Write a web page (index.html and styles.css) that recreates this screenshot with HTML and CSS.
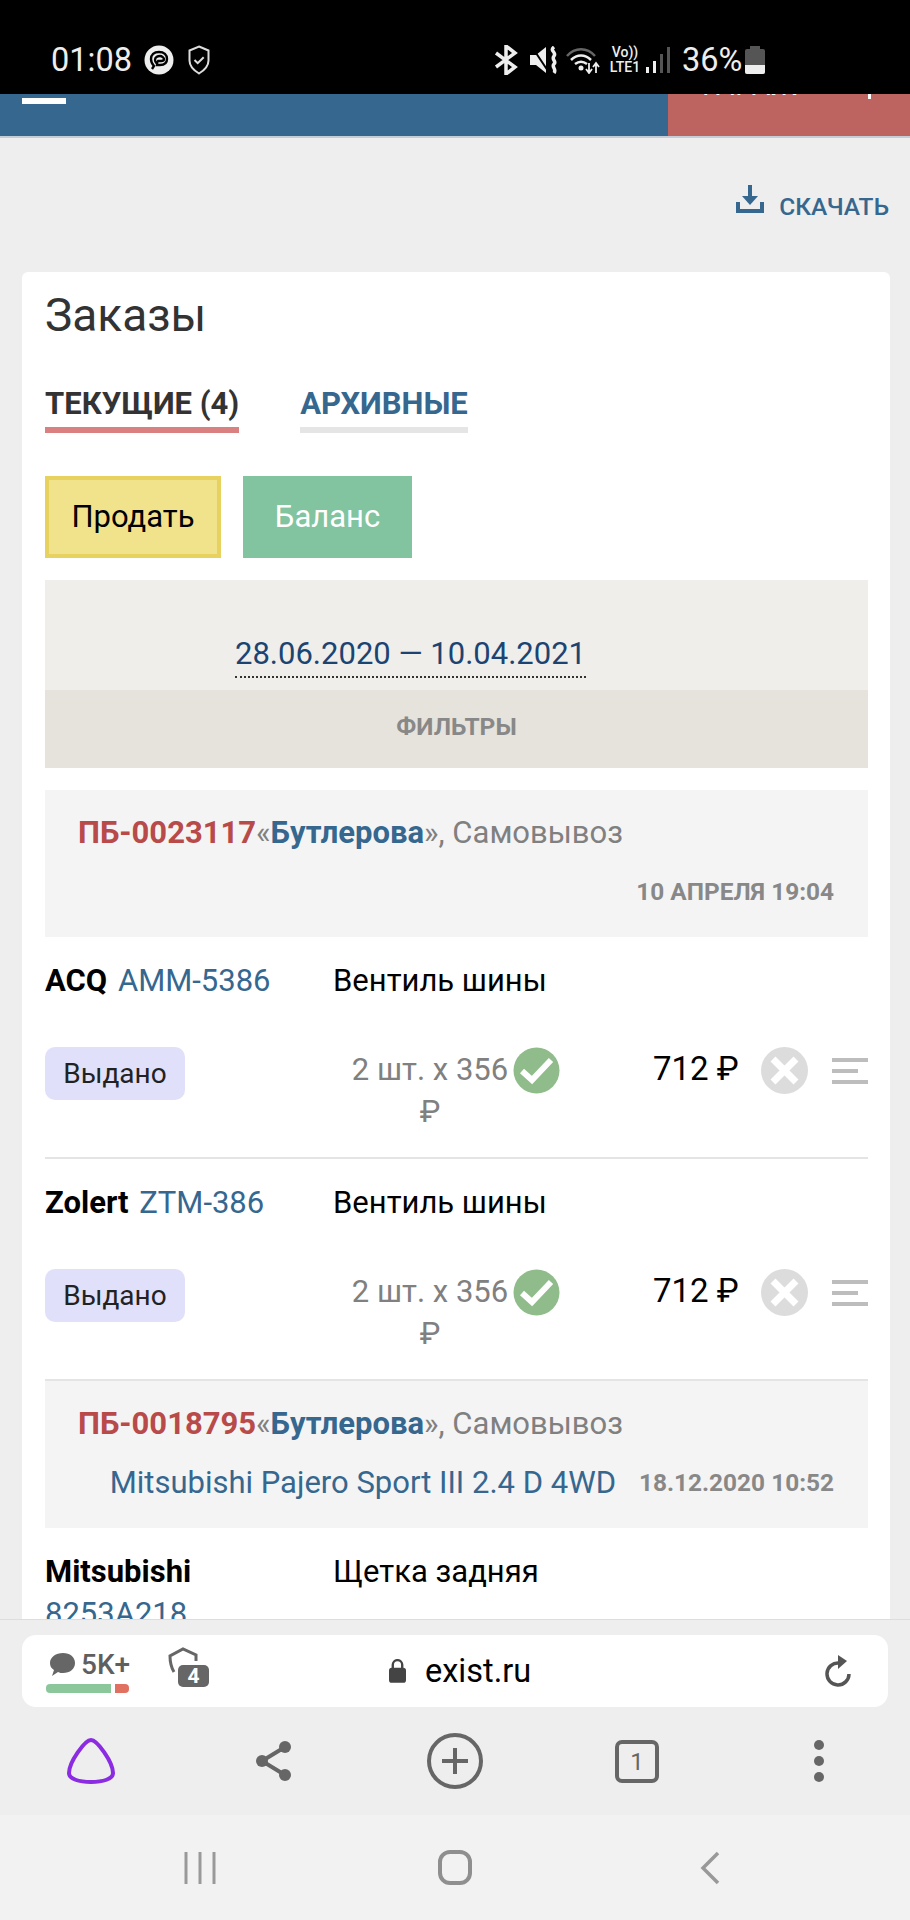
FILE: index.html
```html
<!DOCTYPE html>
<html lang="ru">
<head>
    <meta charset="utf-8">
    <meta name="viewport" content="width=device-width, initial-scale=1">
    <title>Заказы</title>
    <link rel="stylesheet" href="styles.css">
</head>
<body>
    <div class="status-bar">
        <span class="time">01:08</span>
        <svg class="st-p" viewBox="0 0 30 30"><circle cx="15" cy="15" r="14.500" fill="#eee"/><path d="M8 24l2-3c-2-2-3-4-3-7 0-4 3-7 8-7s8 3 8 7-3 6-7 6h-3c0-1 0-3 1-4h3c2 0 3-1 3-2s-2-3-4-3-5 1-5 4c0 2 1 3 2 4" fill="none" stroke="#000" stroke-width="2.400"/></svg>
        <svg class="st-shield" viewBox="0 0 22 30"><path d="M11 1.500l9.500 4v10c0 6-4.500 10-9.500 13-5-3-9.500-7-9.500-13v-10z" fill="none" stroke="#ddd" stroke-width="2"/><path d="M6.500 15l3.200 3.200 6-6" fill="none" stroke="#ddd" stroke-width="2"/></svg>
        <div class="status-right">
            <svg class="st-bt" viewBox="0 0 26 30"><path d="M3 8l19 14-9 7V1l9 7L3 22" fill="none" stroke="#eee" stroke-width="3.500"/></svg>
            <svg class="st-mute" viewBox="0 0 27 28"><path d="M0 9h6l10-8v26L6 19H0z" fill="#eee"/><path d="M2 1l16 24" stroke="#000" stroke-width="2"/><path d="M24 1c-5 4 3 5 0 9s3 5 0 8 3 5 0 9" fill="none" stroke="#eee" stroke-width="3.500"/></svg>
            <svg class="st-wifi" viewBox="0 0 34 28"><path d="M1 10c8-9 20-9 28 0" fill="none" stroke="#666" stroke-width="2.500"/><path d="M5 14c6-6 14-6 20 0M9 18c4-3 8-3 12 0" fill="none" stroke="#eee" stroke-width="2.500"/><circle cx="15" cy="22" r="2.500" fill="#eee"/><path d="M23 17v9m-3-3l3 4 3-4M30 27v-9m-3 3l3-4 3 4" fill="none" stroke="#eee" stroke-width="1.800"/></svg>
            <div class="st-volte"><span>Vo))</span><span>LTE1</span></div>
            <div class="st-signal"><i class="on s1"></i><i class="on s2"></i><i class="s3"></i><i class="s4"></i></div>
            <span class="percent">36%</span>
            <div class="st-battery"><div class="battery-cap"></div><div class="battery-body"><div class="battery-fill"></div></div></div>
        </div>
    </div>

    <div class="site-header">
        <div class="menu-cell"><div class="menu-line"></div></div>
        <div class="garage-cell">
            <span class="garage-text">ГАРАЖ</span>
            <span class="garage-arrow"></span>
        </div>
    </div>

    <div class="main">
        <div class="download-row">
            <svg class="download-icon" viewBox="0 0 28 28"><path d="M14 0v15" stroke="#36678f" stroke-width="4" fill="none"/><path d="M6 11h16l-8 9z" fill="#36678f"/><path d="M2 17v9h24v-9" fill="none" stroke="#36678f" stroke-width="4"/></svg>
            <span class="download-text">СКАЧАТЬ</span>
        </div>

        <div class="card">
            <h1 class="title">Заказы</h1>
            <div class="tabs">
                <div class="tab tab-active">ТЕКУЩИЕ (4)</div>
                <div class="tab tab-link">АРХИВНЫЕ</div>
            </div>
            <div class="actions">
                <div class="btn btn-sell">Продать</div>
                <div class="btn btn-balance">Баланс</div>
            </div>
            <div class="period">
                <span class="period-date">28.06.2020 — 10.04.2021</span>
            </div>
            <div class="filters">ФИЛЬТРЫ</div>

            <div class="order-head">
                <div class="order-line"><b class="order-num">ПБ-0023117</b>«<b class="order-shop">Бутлерова</b>», Самовывоз</div>
                <div class="order-meta"><span class="order-date">10 АПРЕЛЯ 19:04</span></div>
            </div>
            <div class="item item-line">
                <div class="item-top">
                    <div class="brand"><b>ACQ</b> <span class="code">AMM-5386</span></div>
                    <div class="item-name">Вентиль шины</div>
                </div>
                <div class="item-bottom">
                    <div><span class="badge">Выдано</span></div>
                    <div class="qty">2 шт. x 356 ₽</div>
                    <svg class="icon-round" viewBox="0 0 47 47"><circle cx="23.500" cy="23.500" r="23" fill="#8fbc8a"/><path d="M9 24l10 9 19-20" fill="none" stroke="#fff" stroke-width="6"/></svg>
                    <div class="price">712 ₽</div>
                    <svg class="icon-round" viewBox="0 0 47 47"><circle cx="23.500" cy="23.500" r="23.500" fill="#dcdcdc"/><path d="M12 12l23 23M35 12L12 35" fill="none" stroke="#fff" stroke-width="7"/></svg>
                    <svg class="icon-lines" viewBox="0 0 36 26"><path d="M0 2h36M0 13h26M0 24h36" stroke="#bdbdbd" stroke-width="4"/></svg>
                </div>
            </div>
            <div class="item item-line">
                <div class="item-top">
                    <div class="brand"><b>Zolert</b> <span class="code">ZTM-386</span></div>
                    <div class="item-name">Вентиль шины</div>
                </div>
                <div class="item-bottom">
                    <div><span class="badge">Выдано</span></div>
                    <div class="qty">2 шт. x 356 ₽</div>
                    <svg class="icon-round" viewBox="0 0 47 47"><circle cx="23.500" cy="23.500" r="23" fill="#8fbc8a"/><path d="M9 24l10 9 19-20" fill="none" stroke="#fff" stroke-width="6"/></svg>
                    <div class="price">712 ₽</div>
                    <svg class="icon-round" viewBox="0 0 47 47"><circle cx="23.500" cy="23.500" r="23.500" fill="#dcdcdc"/><path d="M12 12l23 23M35 12L12 35" fill="none" stroke="#fff" stroke-width="7"/></svg>
                    <svg class="icon-lines" viewBox="0 0 36 26"><path d="M0 2h36M0 13h26M0 24h36" stroke="#bdbdbd" stroke-width="4"/></svg>
                </div>
            </div>

            <div class="order-head">
                <div class="order-line"><b class="order-num">ПБ-0018795</b>«<b class="order-shop">Бутлерова</b>», Самовывоз</div>
                <div class="order-meta"><span class="order-car">Mitsubishi Pajero Sport III 2.4 D 4WD</span><span class="order-date">18.12.2020 10:52</span></div>
            </div>
            <div class="item">
                <div class="item-top">
                    <div class="brand"><b>Mitsubishi</b> <span class="code">8253A218</span></div>
                    <div class="item-name">Щетка задняя</div>
                </div>
            </div>
        </div>
    </div>

    <div class="browser">
        <div class="url-box">
            <div class="comments">
                <div class="comments-top">
                    <svg class="comment-icon" viewBox="0 0 25 23"><path d="M13 0c7 0 12 4 12 10s-5 10-12 10c-2 0-3 0-5-1l-6 4 2-6C1 15 0 13 0 10 0 4 6 0 13 0z" fill="#666"/></svg>
                    <span class="comments-count">5K+</span>
                </div>
                <div class="meter"><div class="meter-good"></div><div class="meter-bad"></div></div>
            </div>
            <div class="shield">
                <svg class="shield-icon" viewBox="0 0 30 26"><path d="M6 25C3 20 2 15 2 9l13-7 13 6v6" fill="none" stroke="#666" stroke-width="3"/></svg>
                <span class="shield-badge">4</span>
            </div>
            <div class="address">
                <svg class="lock" viewBox="0 0 18 25"><path d="M4 10V6a5 5 0 0 1 10 0v4" fill="none" stroke="#444" stroke-width="2.500"/><rect y="9" width="18" height="16" rx="3" fill="#444"/></svg>
                <span class="host">exist.ru</span>
            </div>
            <svg class="reload" viewBox="0 0 26 34"><path d="M14 9A11 11 0 1 0 24 20" fill="none" stroke="#555" stroke-width="3.500"/><path d="M13 1l9 6-9 8z" fill="#555"/></svg>
        </div>
        <div class="toolbar">
            <div class="tool"><svg class="alice" viewBox="0 0 48 46"><path d="M24 2C30 2 46 24 46 35 46 41 36 44 24 44 12 44 2 41 2 35 2 24 18 2 24 2z" fill="none" stroke="#8b2be2" stroke-width="4"/></svg></div>
            <div class="tool"><svg class="share" viewBox="0 0 35 40"><path d="M29 6L6 20l23 14" fill="none" stroke="#666" stroke-width="4"/><circle cx="29" cy="6" r="6" fill="#666"/><circle cx="6" cy="20" r="6" fill="#666"/><circle cx="29" cy="34" r="6" fill="#666"/></svg></div>
            <div class="tool"><svg class="plus" viewBox="0 0 56 56"><circle cx="28" cy="28" r="26" fill="none" stroke="#666" stroke-width="4"/><path d="M28 15v26M15 28h26" stroke="#666" stroke-width="4"/></svg></div>
            <div class="tool"><div class="tab-count">1</div></div>
            <div class="tool"><div class="dots"><i></i><i></i><i></i></div></div>
        </div>
    </div>

    <div class="nav-bar">
        <div class="nav-cell"><svg class="nav-recent" viewBox="0 0 32 34"><path d="M2 1v32M16 1v32M30 1v32" stroke="#999" stroke-width="3"/></svg></div>
        <div class="nav-cell"><div class="nav-home"></div></div>
        <div class="nav-cell"><svg class="nav-back" viewBox="0 0 20 34"><path d="M18 2L3 17l15 15" fill="none" stroke="#999" stroke-width="3.500"/></svg></div>
    </div>
</body>
</html>
```

FILE: styles.css
```css
* {
    box-sizing: border-box;
}
body {
    margin: 0;
    width: 910px;
    height: 1920px;
    overflow: hidden;
    display: flex;
    flex-direction: column;
    font-family: Roboto, "Liberation Sans", sans-serif;
    background-color: #eee;
    color: #000;
}
svg {
    display: block;
    flex-shrink: 0;
}

/* phone status bar */
.status-bar {
    height: 94px;
    flex-shrink: 0;
    background-color: #000;
    color: #eee;
    display: flex;
    align-items: center;
    padding: 26px 0 0 51px;
}
.time {
    font-size: 32.500px;
    line-height: 36px;
    width: 93px;
}
.st-p {
    width: 30px;
    height: 30px;
    margin-right: 14px;
}
.st-shield {
    width: 22px;
    height: 30px;
}
.status-right {
    display: flex;
    align-items: center;
    margin-left: 283px;
}
.st-bt {
    width: 26px;
    height: 30px;
    margin-right: 11px;
}
.st-mute {
    width: 27px;
    height: 28px;
    margin-right: 9px;
}
.st-wifi {
    width: 34px;
    height: 28px;
    margin-right: 7px;
}
.st-volte {
    width: 36px;
    display: flex;
    flex-direction: column;
    align-items: center;
    font-size: 14px;
    line-height: 15px;
    font-weight: 500;
    white-space: nowrap;
    margin-right: 3px;
}
.st-signal {
    display: flex;
    align-items: flex-end;
    gap: 4px;
    height: 26px;
    width: 25px;
    margin-right: 11px;
}
.st-signal i {
    display: block;
    width: 3px;
    background-color: #555;
}
.st-signal .on {
    background-color: #eee;
}
.s1 { height: 6px; }
.s2 { height: 12px; }
.s3 { height: 19px; }
.s4 { height: 26px; }
.percent {
    font-size: 32.500px;
    line-height: 36px;
    width: 63px;
    white-space: nowrap;
}
.st-battery {
    width: 20px;
}
.battery-cap {
    width: 10px;
    height: 3px;
    margin: 0 auto;
    background-color: #555;
}
.battery-body {
    height: 25px;
    background-color: #555;
    border-radius: 2px;
    display: flex;
    align-items: flex-end;
}
.battery-fill {
    width: 100%;
    height: 9px;
    background-color: #eee;
    border-radius: 0 0 2px 2px;
}

/* site header, scrolled under the status bar */
.site-header {
    height: 44px;
    flex-shrink: 0;
    display: flex;
    background-color: #36678f;
    border-bottom: 2px solid #c5ced6;
    overflow: hidden;
}
.menu-cell {
    flex: 1;
    padding: 4px 0 0 22px;
}
.menu-line {
    width: 44px;
    height: 6px;
    background-color: #fff;
}
.garage-cell {
    width: 242px;
    background-color: #bd6461;
    display: flex;
    align-items: flex-start;
    padding-left: 34px;
}
.garage-text {
    color: #fff;
    font-size: 28px;
    line-height: 28px;
    letter-spacing: 1px;
    margin-top: -22px;
}
.garage-arrow {
    width: 3px;
    height: 5px;
    margin-left: 70px;
    background-color: #fff;
}

.main {
    flex: 1;
    min-height: 0;
    overflow: hidden;
    padding: 0 20px 0 22px;
}
.download-row {
    height: 134px;
    padding-top: 47px;
    display: flex;
    justify-content: flex-end;
    align-items: flex-start;
    color: #36678f;
}
.download-icon {
    width: 28px;
    height: 28px;
    margin-right: 15px;
}
.download-text {
    font-size: 24.500px;
    line-height: 28px;
    font-weight: 500;
    margin: 8px 1px 0 0;
}

.card {
    background-color: #fff;
    border-radius: 6px;
    padding: 18px 22px 0 23px;
    font-size: 31px;
}
.title {
    margin: 0 0 46px;
    font-size: 46px;
    line-height: 50px;
    font-weight: 400;
    color: #333;
}
.tabs {
    display: flex;
    gap: 61px;
}
.tab {
    font-size: 31px;
    line-height: 36px;
    font-weight: 700;
    padding-bottom: 5px;
    border-bottom: 6px solid #e5e5e5;
}
.tab-active {
    color: #333;
    border-bottom-color: #d98080;
}
.tab-link {
    color: #36678f;
}
.actions {
    display: flex;
    gap: 22px;
    margin-top: 43px;
}
.btn {
    height: 82px;
    line-height: 82px;
    text-align: center;
}
.btn-sell {
    width: 176px;
    line-height: 74px;
    background-color: #f1e28c;
    border: 4px solid #e8d25f;
}
.btn-balance {
    width: 169px;
    background-color: #82c4a0;
    color: #fff;
}
.period {
    margin-top: 22px;
    height: 110px;
    padding: 55px 0 0 190px;
    background-color: #efeeeb;
}
.period-date {
    display: inline-block;
    line-height: 36px;
    padding-bottom: 4px;
    color: #1c4472;
    border-bottom: 2px dotted #333;
}
.filters {
    height: 78px;
    line-height: 74px;
    text-align: center;
    font-size: 24.500px;
    font-weight: 700;
    color: #888;
    background-color: #e6e3dd;
}

.order-head {
    height: 147px;
    padding: 25px 34px 0 33px;
    background-color: #f4f4f4;
    color: #808080;
}
.filters + .order-head {
    margin-top: 22px;
}
.order-line {
    line-height: 36px;
}
.order-num {
    color: #b84a4a;
}
.order-shop {
    color: #36678f;
}
.order-meta {
    margin-top: 23px;
    display: flex;
    justify-content: flex-end;
    align-items: center;
    gap: 23px;
    line-height: 36px;
}
.order-car {
    color: #36678f;
}
.order-date {
    font-size: 24.400px;
    font-weight: 700;
    color: #888;
}

.item {
    padding: 23px 0 26px;
}
.item-line {
    border-bottom: 2px solid #e4e4e4;
}
.item-top {
    display: flex;
    line-height: 42px;
}
.brand {
    width: 288px;
    padding-right: 40px;
}
.brand b {
    margin-right: 3px;
}
.code {
    color: #36678f;
}
.item-bottom {
    margin-top: 45px;
    display: grid;
    grid-template-columns: 302px 166px 47px 201px 47px 60px;
    align-items: start;
}
.badge {
    display: inline-block;
    width: 140px;
    height: 53px;
    line-height: 53px;
    text-align: center;
    border-radius: 10px;
    font-size: 28px;
    color: #222;
    background-color: #e0e0fa;
}
.qty {
    height: 82px;
    margin-top: 2px;
    line-height: 42px;
    text-align: center;
    color: #808080;
}
.icon-round {
    width: 47px;
    height: 47px;
}
.price {
    padding-left: 93px;
    margin-top: 2px;
    font-size: 33px;
    line-height: 40px;
    white-space: nowrap;
}
.icon-lines {
    width: 36px;
    height: 26px;
    margin: 11px 0 0 24px;
}

/* browser chrome at the bottom */
.browser {
    height: 196px;
    flex-shrink: 0;
    padding: 15px 22px 0;
    background-color: #eee;
    border-top: 1px solid #ddd;
}
.url-box {
    height: 72px;
    display: flex;
    align-items: center;
    padding: 0 37px 0 24px;
    background-color: #fff;
    border-radius: 14px;
}
.comments {
    width: 85px;
}
.comments-top {
    display: flex;
    align-items: center;
    gap: 6px;
    padding-left: 4px;
    height: 30px;
}
.comment-icon {
    width: 25px;
    height: 23px;
}
.comments-count {
    font-size: 28px;
    font-weight: 500;
    color: #5f5f5f;
}
.meter {
    display: flex;
    gap: 4px;
    margin-top: 5px;
}
.meter-good {
    width: 65px;
    height: 9px;
    border-radius: 4px 0 0 4px;
    background-color: #8cc79b;
}
.meter-bad {
    width: 14px;
    height: 9px;
    border-radius: 0 4px 4px 0;
    background-color: #e07060;
}
.shield {
    position: relative;
    width: 41px;
    height: 40px;
    margin: 0 0 8px 37px;
}
.shield-icon {
    width: 30px;
    height: 26px;
}
.shield-badge {
    position: absolute;
    right: 0;
    bottom: 0;
    width: 31px;
    height: 22px;
    line-height: 22px;
    text-align: center;
    font-size: 21px;
    font-weight: 700;
    color: #fff;
    background-color: #666;
    border-radius: 5px;
}
.address {
    display: flex;
    align-items: center;
    gap: 19px;
    margin-left: 180px;
}
.lock {
    width: 17px;
    height: 24px;
}
.host {
    font-size: 32.500px;
    line-height: 36px;
}
.reload {
    width: 26px;
    height: 34px;
    margin-left: auto;
}
.toolbar {
    display: grid;
    grid-template-columns: repeat(5, 182px);
    margin: 0 -22px;
    height: 108px;
}
.tool {
    display: flex;
    align-items: center;
    justify-content: center;
}
.alice {
    width: 48px;
    height: 46px;
}
.share {
    width: 35px;
    height: 40px;
}
.plus {
    width: 56px;
    height: 56px;
}
.tab-count {
    width: 44px;
    height: 43px;
    line-height: 36px;
    text-align: center;
    font-size: 24px;
    color: #666;
    border: 4px solid #666;
    border-radius: 7px;
}
.dots {
    display: flex;
    flex-direction: column;
    gap: 6px;
}
.dots i {
    display: block;
    width: 10px;
    height: 10px;
    border-radius: 50%;
    background-color: #666;
}

.nav-bar {
    height: 105px;
    flex-shrink: 0;
    padding: 0 72px;
    display: grid;
    grid-template-columns: repeat(3, 1fr);
    background-color: #f2f2f2;
}
.nav-cell {
    display: flex;
    align-items: center;
    justify-content: center;
}
.nav-recent {
    width: 32px;
    height: 34px;
}
.nav-home {
    width: 34px;
    height: 35px;
    border: 4px solid #8f8f8f;
    border-radius: 12px;
}
.nav-back {
    width: 20px;
    height: 34px;
}
```
